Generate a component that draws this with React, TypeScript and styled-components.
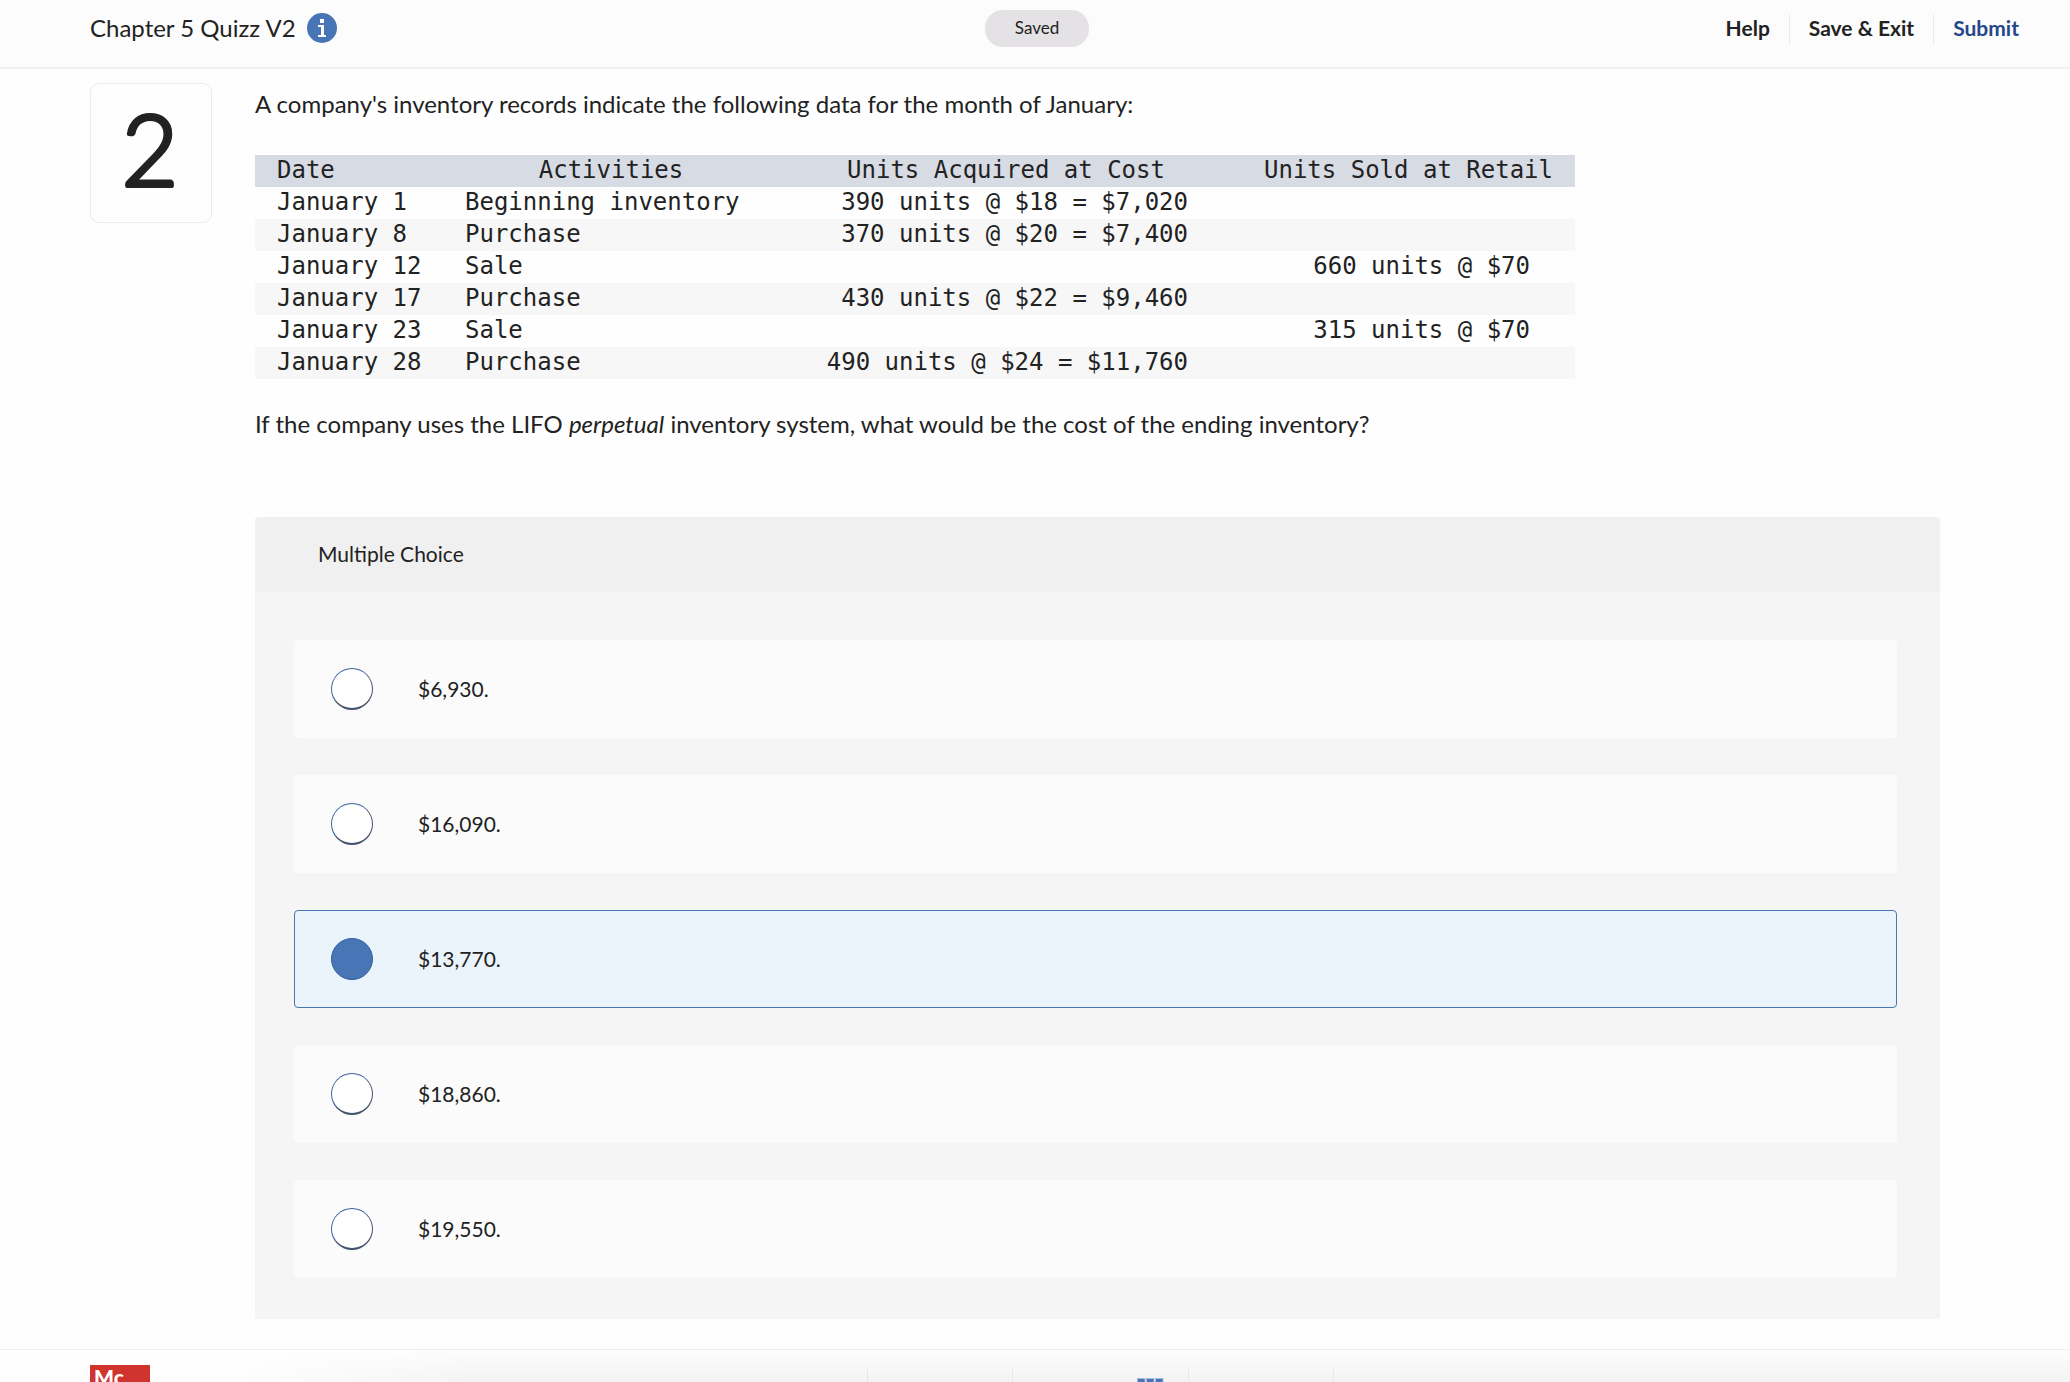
import React, { useState } from "react";
import styled, { createGlobalStyle } from "styled-components";

const GlobalStyle = createGlobalStyle`
  *, *::before, *::after { box-sizing: border-box; }
  body {
    margin: 0;
    background: #fefefe;
    color: #222;
    font-family: Lato, "Open Sans", sans-serif;
    font-size: 24px;
    line-height: 32px;
  }
`;

const Page = styled.div`
  display: flex;
  flex-direction: column;
  height: 100vh;
  overflow: hidden;
`;

const TopBar = styled.header`
  display: grid;
  grid-template-columns: 1fr auto 1fr;
  align-items: start;
  flex: none;
  height: 69px;
  padding: 10px 51px 0 55px;
  background: #fcfcfc;
  border-bottom: 2px solid #f0f0f0;
`;

const TitleGroup = styled.div`
  display: flex;
  align-items: center;
  gap: 11px;
  height: 36px;
  padding-left: 35px;
`;

const Title = styled.h1`
  margin: 0;
  font-size: 24px;
  font-weight: 400;
`;

const InfoButton = styled.button`
  display: flex;
  width: 30px;
  height: 30px;
  padding: 0;
  border: 0;
  border-radius: 50%;
  background: #4775b5;
`;

const SavedPill = styled.div`
  height: 37px;
  padding: 0 30px;
  border-radius: 18px;
  background: #e4e2e5;
  font-size: 17px;
  line-height: 36px;
`;

const Actions = styled.nav`
  display: flex;
  justify-content: flex-end;
  padding-top: 4px;
`;

const Action = styled.button<{ $accent?: boolean }>`
  height: 31px;
  padding: 0 19px 4px;
  border: 0;
  border-left: 1px solid #ebebeb;
  background: none;
  color: ${(p) => (p.$accent ? "#23478a" : "#222")};
  font: 700 21px/27px Lato, "Open Sans", sans-serif;

  &:first-child { border-left: 0; }
  &:last-child { padding-right: 0; }
`;

const Main = styled.main`
  display: flex;
  align-items: flex-start;
  flex: none;
  gap: 43px;
  padding: 14px 130px 30px 90px;
`;

const NumberCard = styled.div`
  flex: none;
  width: 122px;
  height: 140px;
  border: 1px solid #ebebeb;
  border-radius: 9px;
`;

const Numeral = styled.svg`
  display: block;
  width: 100%;
  height: 100%;
  fill: #222;
  stroke: #222;
  stroke-width: 4px;
  stroke-linejoin: round;
  font: 300 98px Lato, sans-serif;
  text-anchor: middle;
`;

const Question = styled.section`
  flex: 1;
  min-width: 0;
  padding-top: 5px;
`;

const Prompt = styled.p`
  margin: 0;
`;

const DataTable = styled.table`
  width: 1320px;
  max-width: 100%;
  margin: 35px 0 29px;
  border-collapse: collapse;
  table-layout: fixed;
  font: 24px/30px "DejaVu Sans Mono", monospace;
  white-space: nowrap;

  thead tr { background: #d7dbe4; }
  tbody tr:nth-child(even) { background: #f7f7f7; }
`;

const Column = styled.col<{ $width: number }>`
  width: ${(p) => p.$width}px;
`;

const HeadCell = styled.th<{ $align: string }>`
  height: 32px;
  padding: 0 22px;
  font-weight: 400;
  text-align: ${(p) => p.$align};
  vertical-align: top;
`;

const Cell = styled.td<{ $align?: string; $inset?: number }>`
  height: 32px;
  padding: 0 ${(p) => p.$inset ?? 22}px 0 22px;
  text-align: ${(p) => p.$align ?? "left"};
  vertical-align: top;
`;

const Panel = styled.fieldset`
  min-width: 0;
  margin: 77px 0 0;
  padding: 0;
  border: 0;
  border-radius: 4px 4px 0 0;
  background: #f5f5f5;
`;

const PanelHeading = styled.legend`
  float: left;
  width: 100%;
  height: 75px;
  padding: 0 63px;
  border-radius: 4px 4px 0 0;
  background: #f0f0f0;
  font-size: 21px;
  line-height: 73px;
`;

const Options = styled.div`
  display: flex;
  flex-direction: column;
  clear: both;
  gap: 37px;
  padding: 48px 43px 41px 39px;
`;

const Option = styled.label<{ $selected: boolean }>`
  display: flex;
  align-items: center;
  gap: 45px;
  height: 98px;
  padding: 0 36px;
  border: 1px solid ${(p) => (p.$selected ? "#4775b5" : "#fbfbfb")};
  border-radius: 4px;
  background: ${(p) => (p.$selected ? "#ebf3fb" : "#fbfbfb")};
  font-size: 21px;
`;

const Radio = styled.input`
  appearance: none;
  flex: none;
  width: 42px;
  height: 42px;
  margin: 0;
  border: 1px solid #3d659f;
  border-right-color: #45536b;
  border-bottom: 2px solid #45536b;
  border-radius: 50%;
  background: #fff;

  &:checked {
    border: 1px solid #33609f;
    background: #4775b5;
  }
`;

const Footer = styled.footer`
  display: flex;
  flex: 1;
  min-height: 0;
  overflow: hidden;
  padding: 0 20px 0 90px;
  border-top: 1px solid #efefef;
  background: linear-gradient(to right, #fefefe 230px, transparent 480px),
    linear-gradient(#fdfdfd, #f3f3f3);
`;

const Logo = styled.div`
  width: 60px;
  height: 60px;
  margin-top: 15px;
  padding: 0 4px;
  background: #d0342e;
  color: #fff;
  font-size: 21px;
  font-weight: 900;
  line-height: 24px;
`;

const Pager = styled.div`
  display: flex;
  margin: 17px auto 0;
`;

const PagerSlot = styled.div<{ $width: number }>`
  display: flex;
  justify-content: flex-end;
  width: ${(p) => p.$width}px;
  height: 60px;
  padding: 11px 24px 0;
  border-left: 1px solid #e8e8e8;

  &:last-child { border-right: 1px solid #e8e8e8; }
`;

const GridButton = styled.button`
  width: 27px;
  height: 27px;
  padding: 0;
  border: 0;
  background: none;
`;

const rows = [
  ["January 1", "Beginning inventory", "390 units @ $18 = $7,020", ""],
  ["January 8", "Purchase", "370 units @ $20 = $7,400", ""],
  ["January 12", "Sale", "", "660 units @ $70"],
  ["January 17", "Purchase", "430 units @ $22 = $9,460", ""],
  ["January 23", "Sale", "", "315 units @ $70"],
  ["January 28", "Purchase", "490 units @ $24 = $11,760", ""],
];

const answers = ["$6,930.", "$16,090.", "$13,770.", "$18,860.", "$19,550."];

const gridSteps = [0, 9, 18];

export default function App() {
  const [selected, setSelected] = useState("$13,770.");

  return (
    <Page>
      <GlobalStyle />
      <TopBar>
        <TitleGroup>
          <Title>Chapter 5 Quizz V2</Title>
          <InfoButton aria-label="Assignment information">
            <svg width="30" height="30" viewBox="0 0 30 30" fill="#fff">
              <rect x="13" y="6" width="4" height="4" />
              <path d="M11 12h6v10h2v2h-8v-2h3v-8h-3z" />
            </svg>
          </InfoButton>
        </TitleGroup>
        <SavedPill role="status">Saved</SavedPill>
        <Actions>
          <Action>Help</Action>
          <Action>Save &amp; Exit</Action>
          <Action $accent>Submit</Action>
        </Actions>
      </TopBar>

      <Main>
        <NumberCard>
          <Numeral viewBox="0 0 120 138">
            <text x="59" y="102">2</text>
          </Numeral>
        </NumberCard>
        <Question>
          <Prompt>
            A company's inventory records indicate the following data for the month of January:
          </Prompt>
          <DataTable>
            <colgroup>
              <Column $width={188} />
              <Column $width={336} />
              <Column $width={454} />
              <Column $width={342} />
            </colgroup>
            <thead>
              <tr>
                <HeadCell $align="left">Date</HeadCell>
                <HeadCell $align="center">Activities</HeadCell>
                <HeadCell $align="center">Units Acquired at Cost</HeadCell>
                <HeadCell $align="right">Units Sold at Retail</HeadCell>
              </tr>
            </thead>
            <tbody>
              {rows.map(([date, activity, acquired, sold]) => (
                <tr key={date}>
                  <Cell>{date}</Cell>
                  <Cell>{activity}</Cell>
                  <Cell $align="right" $inset={45}>{acquired}</Cell>
                  <Cell $align="right" $inset={45}>{sold}</Cell>
                </tr>
              ))}
            </tbody>
          </DataTable>
          <Prompt>
            If the company uses the LIFO <em>perpetual</em> inventory system, what would be the cost
            of the ending inventory?
          </Prompt>

          <Panel>
            <PanelHeading>Multiple Choice</PanelHeading>
            <Options>
              {answers.map((answer) => (
                <Option key={answer} $selected={answer === selected}>
                  <Radio
                    type="radio"
                    name="answer"
                    checked={answer === selected}
                    onChange={() => setSelected(answer)}
                  />
                  {answer}
                </Option>
              ))}
            </Options>
          </Panel>
        </Question>
      </Main>

      <Footer>
        <Logo>Mc</Logo>
        <Pager>
          <PagerSlot $width={145} />
          <PagerSlot $width={176}>
            <GridButton aria-label="Question list">
              <svg width="27" height="27" viewBox="0 0 27 27" fill="#4775b5" stroke="#a9bcd9">
                {gridSteps.map((y) =>
                  gridSteps.map((x) => (
                    <rect key={`${x}-${y}`} x={x + 0.5} y={y + 0.5} width="7.5" height="7.5" />
                  ))
                )}
              </svg>
            </GridButton>
          </PagerSlot>
          <PagerSlot $width={146} />
        </Pager>
      </Footer>
    </Page>
  );
}
